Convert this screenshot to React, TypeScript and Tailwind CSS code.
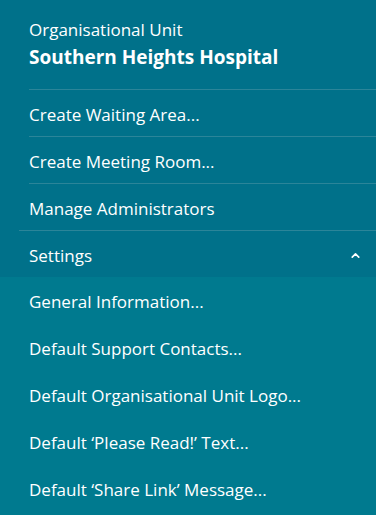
import { ChevronUp } from "lucide-react";

const mainItems = ["Create Waiting Area...", "Create Meeting Room...", "Manage Administrators"];

const settingsItems = [
  "General Information...",
  "Default Support Contacts...",
  "Default Organisational Unit Logo...",
  "Default \u2018Please Read!\u2019 Text...",
  "Default \u2018Share Link\u2019 Message...",
];

export default function App() {
  return (
    <div
      className="min-h-[515px] w-[376px] bg-[#00718a] text-white"
      style={{ fontFamily: '"Open Sans", "Noto Sans", sans-serif' }}
    >
      <div className="pb-[19px] pl-[29px] pt-[19px]">
        <p className="text-[17px] leading-[22px]">Organisational Unit</p>
        <h1 className="mt-[3px] text-[19px] font-bold leading-[26px]">Southern Heights Hospital</h1>
      </div>

      <div className="ml-[29px]">
        {mainItems.map((item) => (
          <div
            key={item}
            className="flex h-[47px] items-center border-t border-[#2b8599] pt-[3px] text-[17px]"
          >
            {item}
          </div>
        ))}
      </div>

      <div className="ml-[19px] flex h-[47px] items-center justify-between border-t border-[#2b8599] pl-[10px] pr-[14px] pt-[3px] text-[17px]">
        <span>Settings</span>
        <ChevronUp size={13} strokeWidth={3} />
      </div>

      <div className="bg-[#007a8f] pb-[10px]">
        {settingsItems.map((item) => (
          <div key={item} className="flex h-[47px] items-center pl-[29px] pt-[3px] text-[17px]">
            {item}
          </div>
        ))}
      </div>
    </div>
  );
}
